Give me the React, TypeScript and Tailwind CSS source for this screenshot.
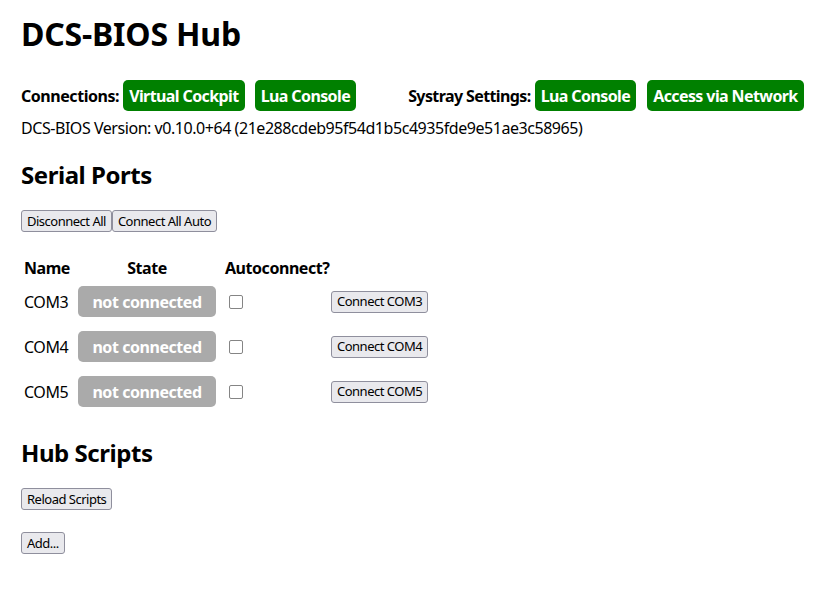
const ports = ["COM3", "COM4", "COM5"];

function GreenButton({ children }: { children: React.ReactNode }) {
  return (
    <span className="inline-flex h-[31px] items-center whitespace-nowrap rounded-[5px] bg-[#008000] px-[6px] font-bold tracking-[-0.6px] text-white">
      {children}
    </span>
  );
}

function PlainButton({ children }: { children: React.ReactNode }) {
  return (
    <button className="h-[22px] whitespace-nowrap rounded-[3px] border border-[#8f8f9d] bg-[#e9e9ed] px-[5px] text-[13px] leading-none tracking-[-0.5px] text-black">
      {children}
    </button>
  );
}

export default function App() {
  return (
    <div
      className="min-h-screen bg-white px-[21px] pt-[14px] text-[16px] tracking-[-0.45px] text-black"
      style={{ fontFamily: '"Noto Sans", "Open Sans", sans-serif' }}
    >
      <h1 className="text-[32px] font-bold leading-[40px] tracking-[-0.2px]">DCS-BIOS Hub</h1>

      <div className="mt-[26px] flex items-center whitespace-nowrap">
        <span className="mr-[4px] font-bold">Connections:</span>
        <GreenButton>Virtual Cockpit</GreenButton>
        <span className="ml-[10px]">
          <GreenButton>Lua Console</GreenButton>
        </span>
        <span className="ml-[52px] mr-[4px] font-bold tracking-[-0.6px]">Systray Settings:</span>
        <GreenButton>Lua Console</GreenButton>
        <span className="ml-[11px]">
          <GreenButton>Access via Network</GreenButton>
        </span>
      </div>
      <div className="mt-[3px] whitespace-nowrap leading-[28px]">
        DCS-BIOS Version: v0.10.0+64 (21e288cdeb95f54d1b5c4935fde9e51ae3c58965)
      </div>

      <h2 className="mt-[18px] text-[24px] font-bold leading-[30px]">Serial Ports</h2>
      <div className="mt-[20px] flex">
        <PlainButton>Disconnect All</PlainButton>
        <PlainButton>Connect All Auto</PlainButton>
      </div>

      <div className="mt-[24px] grid grid-cols-[54px_147px_106px_auto] grid-rows-[23px_45px_45px_45px] items-center">
        <div className="pl-[3px] font-bold">Name</div>
        <div className="ml-[3px] w-[138px] text-center font-bold">State</div>
        <div className="pl-[3px] font-bold">Autoconnect?</div>
        <div />
        {ports.map((p) => (
          <div key={p} className="contents">
            <div className="pl-[3px]">{p}</div>
            <div className="ml-[3px] flex h-[31px] w-[138px] items-center justify-center rounded-[5px] bg-[#aaaaaa] font-bold text-white">
              not connected
            </div>
            <div className="flex items-center pl-[7px]">
              <input
                type="checkbox"
                className="m-0 h-[14px] w-[14px] appearance-none rounded-[2px] border border-[#858585] bg-white"
              />
            </div>
            <div className="flex pl-[3px]">
              <PlainButton>Connect {p}</PlainButton>
            </div>
          </div>
        ))}
      </div>

      <h2 className="mt-[24px] text-[24px] font-bold leading-[30px]">Hub Scripts</h2>
      <div className="mt-[20px] flex">
        <PlainButton>Reload Scripts</PlainButton>
      </div>
      <div className="mt-[22px] flex">
        <PlainButton>Add...</PlainButton>
      </div>
    </div>
  );
}
